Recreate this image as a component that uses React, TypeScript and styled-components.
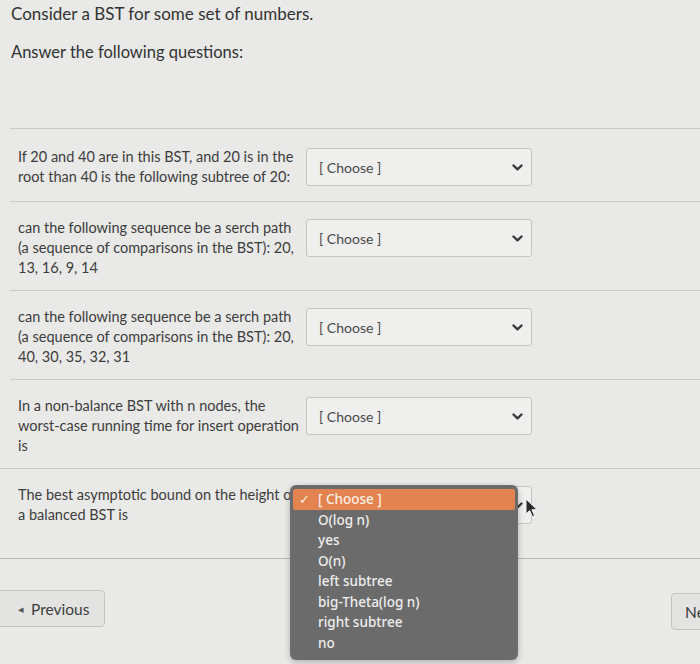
import styled, { createGlobalStyle } from 'styled-components';

const GlobalStyle = createGlobalStyle`
  html, body {
    margin: 0;
    padding: 0;
    background: #e9e9e7;
    overflow: hidden;
  }

  body {
    font-family: Lato, 'Noto Sans', sans-serif;
    color: #3b3b3b;
  }
`;

type Question = {
  text: string;
};

const QUESTIONS: Question[] = [
  { text: 'If 20 and 40 are in this BST, and 20 is in the root than 40 is the following subtree of 20:' },
  { text: 'can the following sequence be a serch path (a sequence of comparisons in the BST): 20, 13, 16, 9, 14' },
  { text: 'can the following sequence be a serch path (a sequence of comparisons in the BST): 20, 40, 30, 35, 32, 31' },
  { text: 'In a non-balance BST with n nodes, the worst-case running time for insert operation is' },
  { text: 'The best asymptotic bound on the height of a balanced BST is' },
];

const OPTIONS = [
  '[ Choose ]',
  'O(log n)',
  'yes',
  'O(n)',
  'left subtree',
  'big-Theta(log n)',
  'right subtree',
  'no',
];

const Chevron = () => (
  <svg width="11" height="7" viewBox="0 0 11 7">
    <polyline points="1.5,1.5 5.5,5.3 9.5,1.5" fill="none" stroke="#3a3a3a" strokeWidth="2.4" strokeLinecap="round" strokeLinejoin="round" />
  </svg>
);

const Cursor = () => (
  <svg width="14" height="20" viewBox="0 0 14 20">
    <path d="M1 1 L1 16 L4.6 12.6 L7.4 18.6 L9.6 17.6 L6.9 11.8 L12 11.6 Z" fill="#2a2a2a" stroke="#f4f4f4" strokeWidth="1" />
  </svg>
);

const App = () => {
  return (
    <>
      <GlobalStyle />
      <StPage>
        <StHeader>
          <h1>Consider a BST for some set of numbers.</h1>
          <p>Answer the following questions:</p>
        </StHeader>

        <StList>
          {QUESTIONS.map((q, i) => {
            const open = i === QUESTIONS.length - 1;
            return (
              <StRow key={i} $first={i === 0} $last={open}>
                <StText>{q.text}</StText>
                <StSelectWrap>
                  <StSelect>
                    <span>[ Choose ]</span>
                    <Chevron />
                  </StSelect>
                  {open && (
                    <>
                      <StMenu>
                        {OPTIONS.map((opt, j) => (
                          <StOption key={opt} $active={j === 0}>
                            <StCheck>{j === 0 ? '✓' : ''}</StCheck>
                            {opt}
                          </StOption>
                        ))}
                      </StMenu>
                      <StCursor>
                        <Cursor />
                      </StCursor>
                    </>
                  )}
                </StSelectWrap>
              </StRow>
            );
          })}
        </StList>

        <StFooter>
          <StNavButton $side="left">
            <StArrow>◂</StArrow>
            Previous
          </StNavButton>
          <StNavButton $side="right">Next</StNavButton>
        </StFooter>
      </StPage>
    </>
  );
};

export default App;

const StPage = styled.main`
  width: 700px;
  height: 664px;
  overflow: hidden;
`;

const StHeader = styled.header`
  padding: 3px 0 0 11px;
  height: 125px;

  h1 {
    margin: 0;
    font-size: 17px;
    font-weight: 400;
    line-height: 22px;
    color: #333;
  }

  p {
    margin: 16px 0 0;
    font-size: 16.5px;
    line-height: 22px;
    color: #333;
  }
`;

const StList = styled.section`
  margin-left: 10px;
`;

const StRow = styled.article<{ $first?: boolean; $last?: boolean }>`
  display: flex;
  align-items: flex-start;
  gap: 4px;

  padding-top: ${({ $first }) => ($first ? '18px' : '16px')};
  padding-bottom: ${({ $first, $last }) => ($last ? '33px' : $first ? '14px' : '12px')};
  padding-left: ${({ $last }) => ($last ? '18px' : '8px')};
  margin-left: ${({ $last }) => ($last ? '-10px' : '0')};
  border-top: 1px solid #c9c9c7;
  border-bottom: ${({ $last }) => ($last ? '1px solid #b9b9b7' : 'none')};
`;

const StText = styled.p`
  width: 284px;
  margin: 0;
  font-size: 14.5px;
  line-height: 20px;
  color: #3d3d3d;
`;

const StSelectWrap = styled.div`
  position: relative;
  margin-top: 1px;
`;

const StSelect = styled.div`
  display: flex;
  justify-content: space-between;
  align-items: center;
  box-sizing: border-box;

  width: 226px;
  height: 38px;
  padding: 0 8px 0 12px;
  background: #efefed;
  border: 1px solid #c4c4c2;
  border-radius: 3px;

  span {
    font-size: 14px;
    color: #4a4a4a;
  }
`;

const StMenu = styled.ul`
  position: absolute;
  top: -1px;
  left: -16px;
  z-index: 5;

  width: 228px;
  margin: 0;
  padding: 4px 3px 7px;
  box-sizing: border-box;
  list-style: none;
  background: #6b6b6b;
  border-radius: 6px;
  box-shadow: 0 2px 6px rgba(0, 0, 0, 0.25);
`;

const StOption = styled.li<{ $active?: boolean }>`
  display: flex;
  align-items: center;

  height: 20.5px;
  padding-left: 6px;
  background: ${({ $active }) => ($active ? '#e3834f' : 'transparent')};
  border-radius: 2px;

  font-family: 'Noto Sans', Roboto, sans-serif;
  font-size: 13.5px;
  font-weight: 500;
  color: ${({ $active }) => ($active ? '#fbeee6' : '#eeeeee')};
`;

const StCheck = styled.span`
  width: 19px;
  font-size: 13px;
`;

const StCursor = styled.div`
  position: absolute;
  top: 12px;
  left: 219px;
  z-index: 6;
`;

const StFooter = styled.footer`
  display: flex;
  justify-content: space-between;
  align-items: flex-start;
  margin-top: 31px;
`;

const StNavButton = styled.button<{ $side: 'left' | 'right' }>`
  display: flex;
  align-items: center;
  gap: 7px;

  height: 37px;
  margin-top: ${({ $side }) => ($side === 'right' ? '3px' : '0')};
  margin-left: ${({ $side }) => ($side === 'left' ? '-4px' : '0')};
  margin-right: ${({ $side }) => ($side === 'right' ? '-33px' : '0')};
  padding: ${({ $side }) => ($side === 'left' ? '0 15px 0 21px' : '0 14px 0 13px')};
  background: #e3e3e1;
  border: 1px solid #c4c4c2;
  border-radius: 4px;

  font-family: Lato, 'Noto Sans', sans-serif;
  font-size: 15.5px;
  color: #3d3d3d;
`;

const StArrow = styled.span`
  font-size: 11px;
  color: #555;
`;
